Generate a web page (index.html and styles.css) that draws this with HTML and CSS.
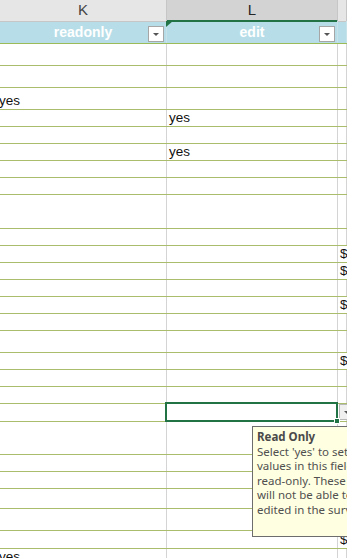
FILE: index.html
```html
<!DOCTYPE html>
<html>
<head>
    <title>Sheet</title>
    <meta name="viewport" content="width=device-width, initial-scale=1.0">
    <link rel="stylesheet" href="styles.css">
</head>
<body>
<div class="sheet">
    <div class="colheads">
        <div class="colhead">K</div>
        <div class="colhead active">L</div>
        <div class="colhead"></div>
    </div>
    <div class="row thead">
        <div class="cell">readonly<span class="filter"></span></div>
        <div class="cell">edit<span class="filter"></span><span class="corner"></span></div>
        <div class="cell"></div>
    </div>
    <div class="row r22"><div class="cell"></div><div class="cell"></div><div class="cell"></div></div>
    <div class="row r22"><div class="cell"></div><div class="cell"></div><div class="cell"></div></div>
    <div class="row r22"><div class="cell k">yes</div><div class="cell"></div><div class="cell"></div></div>
    <div class="row r17"><div class="cell"></div><div class="cell">yes</div><div class="cell"></div></div>
    <div class="row r17"><div class="cell"></div><div class="cell"></div><div class="cell"></div></div>
    <div class="row r17"><div class="cell"></div><div class="cell">yes</div><div class="cell"></div></div>
    <div class="row r17"><div class="cell"></div><div class="cell"></div><div class="cell"></div></div>
    <div class="row r17"><div class="cell"></div><div class="cell"></div><div class="cell"></div></div>
    <div class="row r34"><div class="cell"></div><div class="cell"></div><div class="cell"></div></div>
    <div class="row r17"><div class="cell"></div><div class="cell"></div><div class="cell"></div></div>
    <div class="row r17"><div class="cell"></div><div class="cell"></div><div class="cell m">$</div></div>
    <div class="row r17"><div class="cell"></div><div class="cell"></div><div class="cell m">$</div></div>
    <div class="row r17"><div class="cell"></div><div class="cell"></div><div class="cell"></div></div>
    <div class="row r17"><div class="cell"></div><div class="cell"></div><div class="cell m">$</div></div>
    <div class="row r17"><div class="cell"></div><div class="cell"></div><div class="cell"></div></div>
    <div class="row r22"><div class="cell"></div><div class="cell"></div><div class="cell"></div></div>
    <div class="row r17"><div class="cell"></div><div class="cell"></div><div class="cell m">$</div></div>
    <div class="row r17"><div class="cell"></div><div class="cell"></div><div class="cell"></div></div>
    <div class="row r17"><div class="cell"></div><div class="cell"></div><div class="cell"></div></div>
    <div class="row r18">
        <div class="cell"></div>
        <div class="cell selected"><span class="handle"></span></div>
        <div class="cell"><span class="dv-arrow"></span></div>
    </div>
    <div class="row r33"><div class="cell"></div><div class="cell"></div><div class="cell"></div></div>
    <div class="row r17"><div class="cell"></div><div class="cell"></div><div class="cell"></div></div>
    <div class="row r17"><div class="cell"></div><div class="cell"></div><div class="cell"></div></div>
    <div class="row r20"><div class="cell"></div><div class="cell"></div><div class="cell"></div></div>
    <div class="row r22"><div class="cell"></div><div class="cell"></div><div class="cell"></div></div>
    <div class="row r18"><div class="cell"></div><div class="cell"></div><div class="cell m">$</div></div>
    <div class="row r17"><div class="cell k">yes</div><div class="cell"></div><div class="cell"></div></div>

    <div class="tip">
        <div class="tip-title">Read Only</div>
        <div>Select 'yes' to set</div>
        <div>values in this field</div>
        <div>read-only. These</div>
        <div>will not be able to</div>
        <div>edited in the survey</div>
    </div>
</div>
</body>
</html>
```

FILE: styles.css
```css
html, body {
    margin: 0;
    height: 100%;
    overflow: hidden;
    background-color: #ffffff;
    font-family: "Liberation Sans", Arial, sans-serif;
}
.sheet {
    position: relative;
    width: 347px;
    height: 558px;
    overflow: hidden;
}
.colheads {
    display: grid;
    grid-template-columns: 167px 171px 1fr;
    height: 21px;
    background-color: #e6e6e6;
}
.colhead {
    box-sizing: border-box;
    border-right: 1px solid #c6c6c6;
    border-bottom: 1px solid #c6c6c6;
    font-size: 15px;
    line-height: 20px;
    text-align: center;
    color: #444444;
}
.colhead.active {
    background-color: #d3d3d3;
    border-bottom: 2px solid #217346;
    color: #262626;
}
.row {
    display: grid;
    grid-template-columns: 167px 171px 1fr;
    box-sizing: border-box;
    border-bottom: 1px solid #a9bd6c;
}
.r17 { height: 17px; }
.r18 { height: 18px; }
.r20 { height: 20px; }
.r22 { height: 22px; }
.r33 { height: 33px; }
.r34 { height: 34px; }
.cell {
    position: relative;
    box-sizing: border-box;
    border-right: 1px solid #d4d4d4;
    display: flex;
    align-items: flex-end;
    padding: 0 0 1px 2px;
    font-size: 13.5px;
    line-height: 15px;
    color: #111111;
    white-space: nowrap;
}
.cell.k {
    padding-left: 0;
    text-indent: -1px;
}
.cell.m {
    padding-left: 2px;
}
.thead {
    height: 23px;
    background-color: #b7dee8;
    border-bottom: 1px solid #9bbb59;
}
.thead .cell {
    justify-content: center;
    align-items: center;
    padding: 0;
    border-right-color: #c8e2ea;
    font-size: 14px;
    font-weight: bold;
    color: #ffffff;
}
.filter {
    position: absolute;
    right: 2px;
    top: 5px;
    width: 14px;
    height: 14px;
    background-color: #ffffff;
    border: 1px solid #a6a6a6;
}
.filter::after {
    content: "";
    position: absolute;
    left: 4px;
    top: 6px;
    border-left: 3px solid transparent;
    border-right: 3px solid transparent;
    border-top: 3px solid #555555;
}
.corner {
    position: absolute;
    left: -1px;
    top: 0;
    border-top: 6px solid #217346;
    border-right: 7px solid transparent;
}
.selected {
    margin: -2px 0 -1px -2px;
    border: 2px solid #217346;
    z-index: 2;
}
.handle {
    position: absolute;
    right: -4px;
    bottom: -4px;
    width: 4px;
    height: 4px;
    background-color: #217346;
    border: 1px solid #ffffff;
}
.dv-arrow {
    position: absolute;
    left: 1px;
    top: 0;
    width: 16px;
    height: 16px;
    box-sizing: border-box;
    background-color: #f0f0f0;
    border: 1px solid #b8b8b8;
}
.dv-arrow::after {
    content: "";
    position: absolute;
    left: 4px;
    top: 6px;
    border-left: 3px solid transparent;
    border-right: 3px solid transparent;
    border-top: 3px solid #555555;
}
.tip {
    position: absolute;
    left: 252px;
    top: 426px;
    width: 140px;
    height: 111px;
    box-sizing: border-box;
    padding: 3px 4px;
    background-color: #ffffe1;
    border: 1px solid #6d6d6d;
    font-family: "Noto Sans", sans-serif;
    font-size: 11.5px;
    line-height: 14.6px;
    color: #505050;
    white-space: nowrap;
    z-index: 3;
}
.tip-title {
    font-weight: bold;
    color: #4a4a4a;
}
```
